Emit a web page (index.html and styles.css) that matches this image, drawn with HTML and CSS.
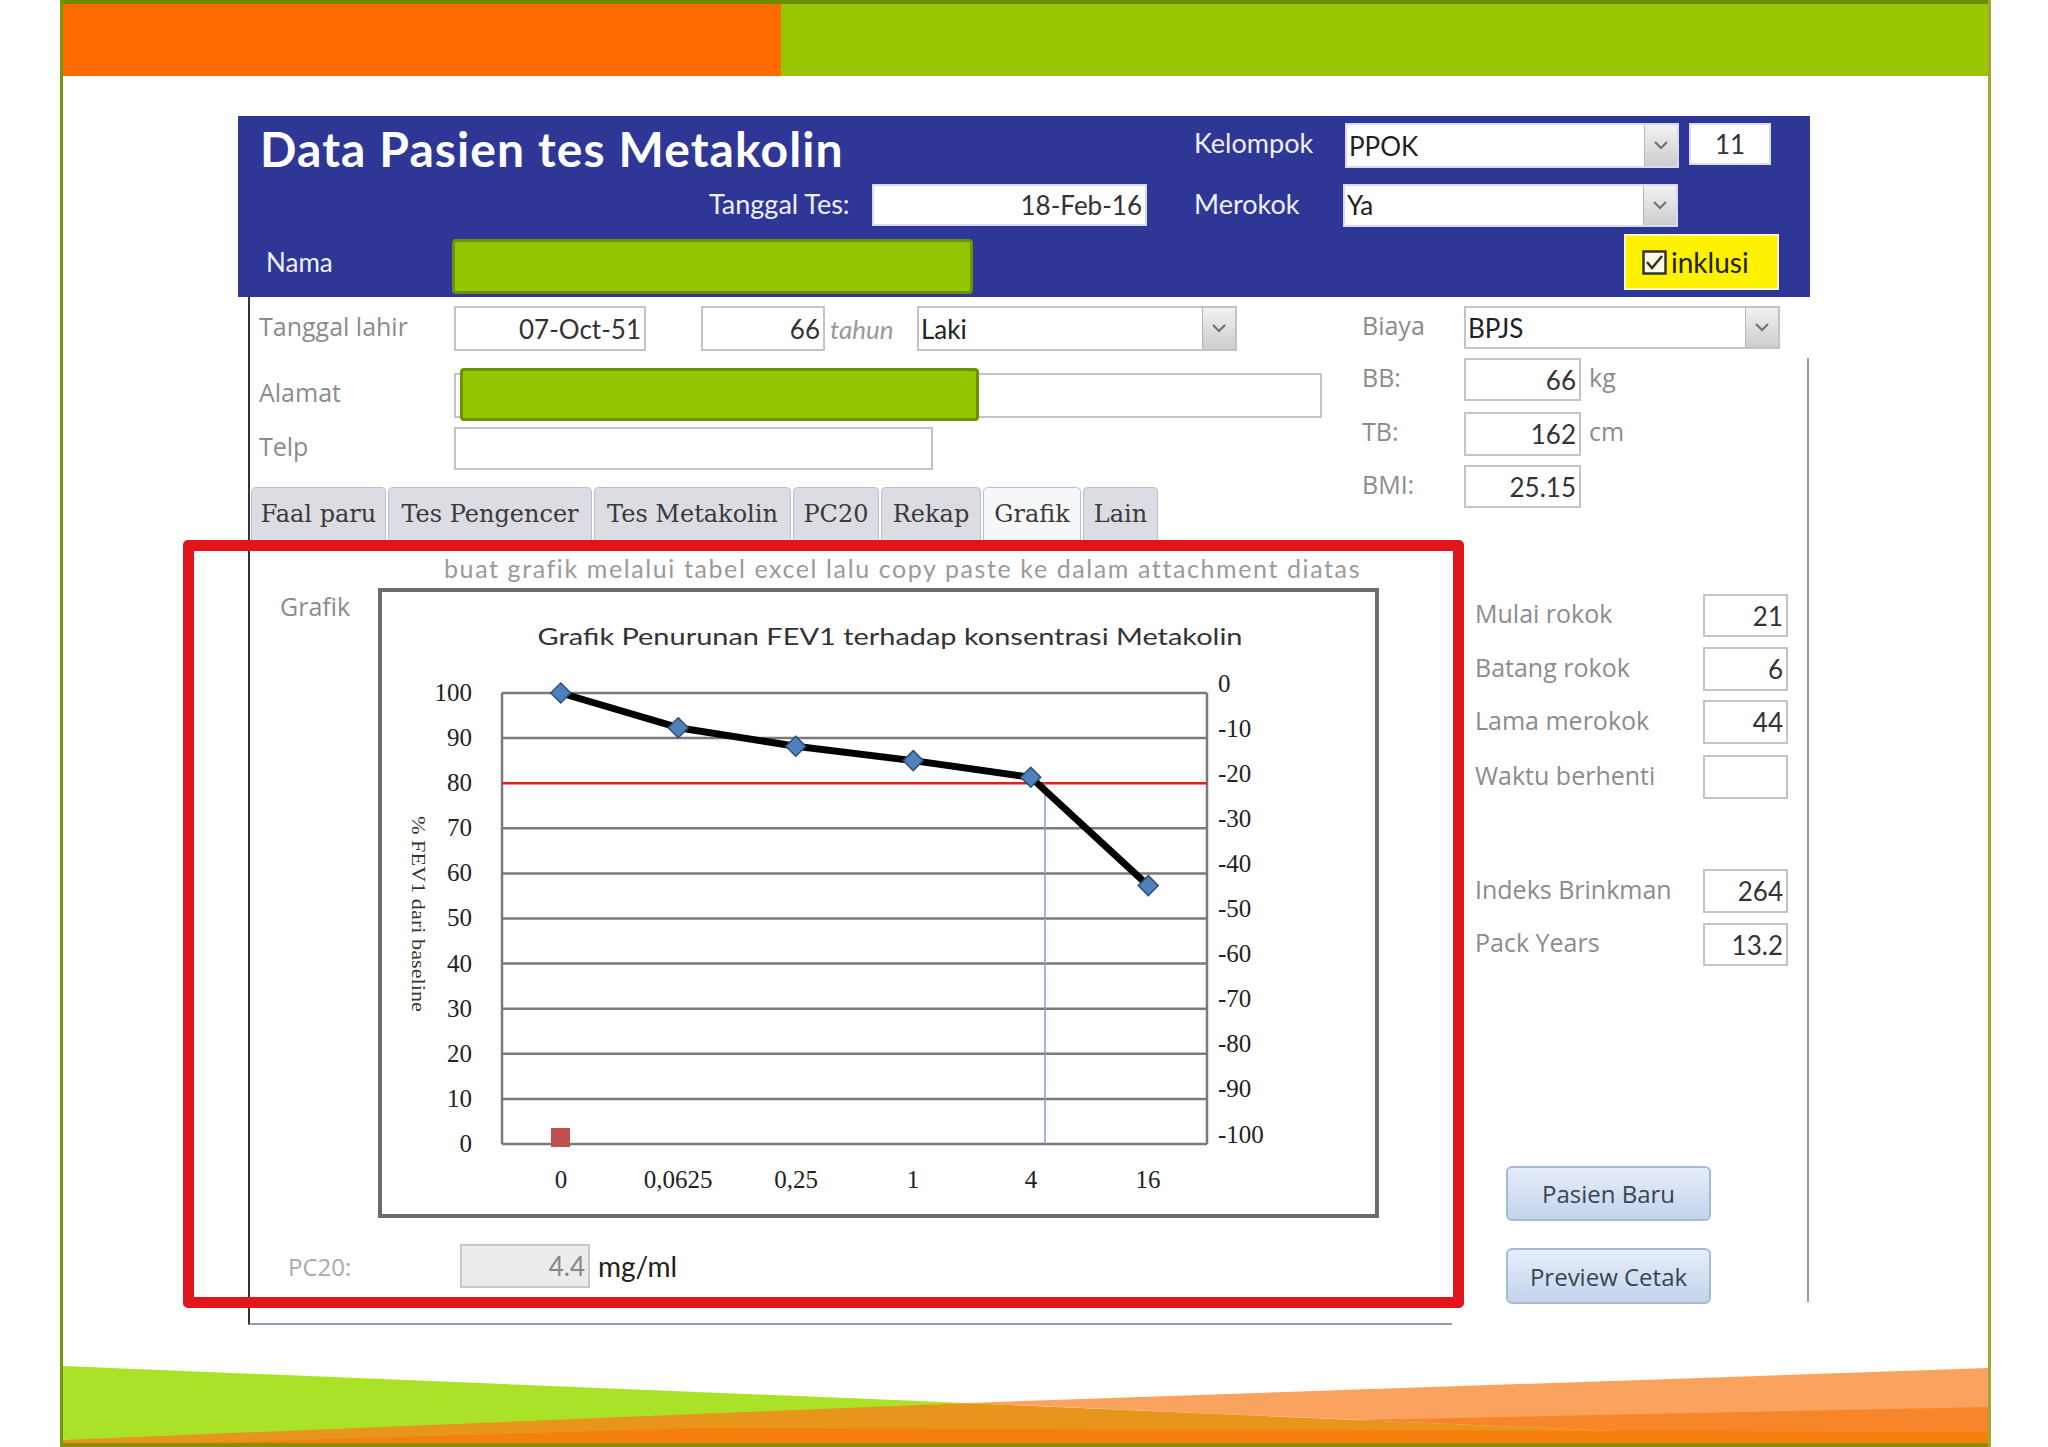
FILE: index.html
```html
<!DOCTYPE html>
<html>
<head>
<meta charset="utf-8">
<title>Data Pasien tes Metakolin</title>
<link rel="stylesheet" href="styles.css">
</head>
<body>
<div class="page">
  <div class="slide">
    <div class="topbar"><div class="bar-orange"></div><div class="bar-green"></div></div>

    <div class="form">
      <div class="header">
        <div class="hrow hrow1">
          <h1 class="title">Data Pasien tes Metakolin</h1>
          <span class="hlabel hl-kel">Kelompok</span>
          <div class="combo hcombo hc-kel"><span class="combo-text">PPOK</span><span class="combo-btn"><svg width="14" height="9" viewBox="0 0 14 9"><polyline points="1,1 7,7 13,1" fill="none" stroke="#707070" stroke-width="2"/></svg></span></div>
          <div class="hbox">11</div>
        </div>
        <div class="hrow hrow2">
          <span class="hlabel hl-tgl">Tanggal Tes:</span>
          <div class="hinput">18-Feb-16</div>
          <span class="hlabel hl-mer">Merokok</span>
          <div class="combo hcombo hc-mer"><span class="combo-text">Ya</span><span class="combo-btn"><svg width="14" height="9" viewBox="0 0 14 9"><polyline points="1,1 7,7 13,1" fill="none" stroke="#707070" stroke-width="2"/></svg></span></div>
        </div>
        <div class="hrow hrow3">
          <span class="hlabel hl-nama">Nama</span>
          <div class="redact redact-nama"></div>
          <div class="inklusi"><svg class="check" width="25" height="25" viewBox="0 0 25 25"><rect x="1.5" y="1.5" width="22" height="22" fill="#fffbe0" stroke="#333" stroke-width="2.5"/><polyline points="5,12 10,18 20,6" fill="none" stroke="#333" stroke-width="2.5"/></svg><span>inklusi</span></div>
        </div>
      </div>

      <div class="body">
        <div class="left-fields">
          <div class="frow fr-lahir">
            <span class="flabel">Tanggal lahir</span>
            <div class="field f-date">07-Oct-51</div>
            <div class="field f-age">66</div>
            <span class="tahun">tahun</span>
            <div class="combo c-laki"><span class="combo-text">Laki</span><span class="combo-btn"><svg width="14" height="9" viewBox="0 0 14 9"><polyline points="1,1 7,7 13,1" fill="none" stroke="#707070" stroke-width="2"/></svg></span></div>
          </div>
          <div class="frow fr-alamat">
            <span class="flabel">Alamat</span>
            <div class="alamat-wrap">
              <div class="field f-alamat"></div>
              <div class="redact redact-alamat"></div>
            </div>
          </div>
          <div class="frow fr-telp">
            <span class="flabel">Telp</span>
            <div class="field f-telp"></div>
          </div>
          <div class="tabs">
            <div class="tab">Faal paru</div>
            <div class="tab">Tes Pengencer</div>
            <div class="tab">Tes Metakolin</div>
            <div class="tab">PC20</div>
            <div class="tab">Rekap</div>
            <div class="tab active">Grafik</div>
            <div class="tab">Lain</div>
          </div>
        </div>

        <div class="right-fields">
          <div class="rrow rr-biaya">
            <span class="rlabel">Biaya</span>
            <div class="combo c-biaya"><span class="combo-text">BPJS</span><span class="combo-btn"><svg width="14" height="9" viewBox="0 0 14 9"><polyline points="1,1 7,7 13,1" fill="none" stroke="#707070" stroke-width="2"/></svg></span></div>
          </div>
          <div class="rrow rr-bb">
            <span class="rlabel">BB:</span>
            <div class="field f-small">66</div>
            <span class="unit">kg</span>
          </div>
          <div class="rrow rr-tb">
            <span class="rlabel">TB:</span>
            <div class="field f-small">162</div>
            <span class="unit">cm</span>
          </div>
          <div class="rrow rr-bmi">
            <span class="rlabel">BMI:</span>
            <div class="field f-small">25.15</div>
          </div>
        </div>

        <div class="vline"></div>

        <div class="tabpage">
          <div class="note">buat grafik melalui tabel excel lalu copy paste ke dalam attachment diatas</div>
          <div class="chart-row">
            <span class="grafik-label">Grafik</span>
            <div class="chart-box">
              <svg class="chart" width="993" height="622" viewBox="0 0 993 622">
                <text class="ch-title" x="508" y="53" text-anchor="middle" textLength="705" lengthAdjust="spacingAndGlyphs">Grafik Penurunan FEV1 terhadap konsentrasi Metakolin</text>
                <g class="grid">
                  <line x1="120" y1="101" x2="825" y2="101"/>
                  <line x1="120" y1="146.1" x2="825" y2="146.1"/>
                  <line x1="120" y1="236.3" x2="825" y2="236.3"/>
                  <line x1="120" y1="281.4" x2="825" y2="281.4"/>
                  <line x1="120" y1="326.5" x2="825" y2="326.5"/>
                  <line x1="120" y1="371.6" x2="825" y2="371.6"/>
                  <line x1="120" y1="416.7" x2="825" y2="416.7"/>
                  <line x1="120" y1="461.8" x2="825" y2="461.8"/>
                  <line x1="120" y1="506.9" x2="825" y2="506.9"/>
                  <line x1="120" y1="552" x2="825" y2="552"/>
                  <line x1="120" y1="101" x2="120" y2="552"/>
                  <line x1="825" y1="101" x2="825" y2="552"/>
                </g>
                <line class="redline" x1="120" y1="191.2" x2="825" y2="191.2"/>
                <line class="blueline" x1="663" y1="191.2" x2="663" y2="552"/>
                <g class="ylab-left">
                  <text x="90" y="109">100</text>
                  <text x="90" y="154">90</text>
                  <text x="90" y="199">80</text>
                  <text x="90" y="244">70</text>
                  <text x="90" y="289">60</text>
                  <text x="90" y="334">50</text>
                  <text x="90" y="380">40</text>
                  <text x="90" y="425">30</text>
                  <text x="90" y="470">20</text>
                  <text x="90" y="515">10</text>
                  <text x="90" y="560">0</text>
                </g>
                <g class="ylab-right">
                  <text x="836" y="100">0</text>
                  <text x="836" y="145">-10</text>
                  <text x="836" y="190">-20</text>
                  <text x="836" y="235">-30</text>
                  <text x="836" y="280">-40</text>
                  <text x="836" y="325">-50</text>
                  <text x="836" y="370">-60</text>
                  <text x="836" y="415">-70</text>
                  <text x="836" y="460">-80</text>
                  <text x="836" y="505">-90</text>
                  <text x="836" y="551">-100</text>
                </g>
                <g class="xlab">
                  <text x="179" y="596">0</text>
                  <text x="296" y="596">0,0625</text>
                  <text x="414" y="596">0,25</text>
                  <text x="531" y="596">1</text>
                  <text x="649" y="596">4</text>
                  <text x="766" y="596">16</text>
                </g>
                <text class="yaxis-title" transform="translate(30,322) rotate(90)" text-anchor="middle" textLength="196" lengthAdjust="spacingAndGlyphs">% FEV1 dari baseline</text>
                <polyline class="series" points="178.75,101 296.25,135.7 413.75,154.2 531.25,168.6 648.75,185.3 766.25,293.6"/>
                <g class="marks">
                  <polygon points="178.75,91 188.75,101 178.75,111 168.75,101"/>
                  <polygon points="296.25,125.7 306.25,135.7 296.25,145.7 286.25,135.7"/>
                  <polygon points="413.75,144.2 423.75,154.2 413.75,164.2 403.75,154.2"/>
                  <polygon points="531.25,158.6 541.25,168.6 531.25,178.6 521.25,168.6"/>
                  <polygon points="648.75,175.3 658.75,185.3 648.75,195.3 638.75,185.3"/>
                  <polygon points="766.25,283.6 776.25,293.6 766.25,303.6 756.25,293.6"/>
                </g>
                <rect class="redsq" x="169" y="536" width="19" height="19"/>
              </svg>
            </div>
          </div>
          <div class="pc-row">
            <span class="pc-label">PC20:</span>
            <div class="field f-pc">4.4</div>
            <span class="pc-unit">mg/ml</span>
          </div>
        </div>

        <div class="sidepanel">
          <div class="srow sr1"><span class="slabel">Mulai rokok</span><div class="field f-side">21</div></div>
          <div class="srow sr2"><span class="slabel">Batang rokok</span><div class="field f-side">6</div></div>
          <div class="srow sr3"><span class="slabel">Lama merokok</span><div class="field f-side">44</div></div>
          <div class="srow sr4"><span class="slabel">Waktu berhenti</span><div class="field f-side"></div></div>
          <div class="srow sr5"><span class="slabel">Indeks Brinkman</span><div class="field f-side">264</div></div>
          <div class="srow sr6"><span class="slabel">Pack Years</span><div class="field f-side">13.2</div></div>
          <div class="btn btn-baru">Pasien Baru</div>
          <div class="btn btn-cetak">Preview Cetak</div>
        </div>
      </div>
    </div>

    <svg class="bottom-deco" width="1925" height="87" viewBox="63 1360 1925 87" preserveAspectRatio="none">
      <polygon class="d-lime" points="63,1366 967,1403 63,1447"/>
      <polygon class="d-light" points="1988,1368 967,1403 1988,1447"/>
      <polygon class="d-amber" points="63,1440 967,1403 1358,1420 1988,1447 63,1447"/>
      <polygon class="d-orange" points="1988,1407 1358,1420 1988,1447"/>
      <polygon class="d-bright" points="63,1447 700,1428 1988,1432 1988,1447"/>
      <rect class="d-line" x="63" y="1443" width="1925" height="4"/>
    </svg>
  </div>
  <div class="highlight"></div>
</div>
</body>
</html>
```

FILE: styles.css
```css
* { box-sizing: border-box; }
html, body { margin: 0; padding: 0; }
body {
  width: 2048px;
  height: 1447px;
  overflow: hidden;
  background: #ffffff;
  font-family: Lato, "Open Sans", sans-serif;
  color: #333;
}
.page { position: relative; width: 2048px; height: 1447px; }

.slide {
  margin-left: 60px;
  width: 1931px;
  height: 1447px;
  border-left: 3px solid #6f9a0a;
  border-right: 3px solid #a0a834;
  display: flex;
  flex-direction: column;
}
.topbar { display: flex; height: 76px; border-top: 4px solid #6b8c00; flex: none; }
.bar-orange { width: 718px; background: #ff6b00; }
.bar-green { flex: 1; background: #99c600; }

.form { margin-left: 175px; margin-top: 40px; width: 1572px; flex: none; }

/* header */
.header { height: 181px; background: #2e3796; padding-top: 7px; }
.hrow { display: flex; align-items: center; }
.hrow1 { height: 45px; }
.hrow2 { height: 42px; margin-top: 16px; }
.hrow3 { height: 60px; margin-top: 8px; align-items: flex-start; }
.title {
  margin: 0 0 0 22px;
  width: 934px;
  height: 45px;
  align-self: flex-start;
  font: 700 48px/51px Lato, sans-serif;
  letter-spacing: 1.1px;
  color: #ffffff;
  white-space: nowrap;
}
.hlabel { color: #eef0ff; font-size: 27px; white-space: nowrap; }
.hl-kel { width: 151px; padding-bottom: 6px; }
.hl-tgl { margin-left: 471px; width: 163px; padding-bottom: 4px; }
.hl-mer { margin-left: 47px; width: 149px; padding-bottom: 4px; }
.hl-nama { margin-left: 28px; width: 186px; line-height: 56px; font-size: 26px; }

.combo {
  display: flex;
  background: #ffffff;
  border: 2px solid #c4c4c4;
  font-size: 26px;
  color: #222;
}
.combo-text { flex: 1; padding-left: 2px; display: flex; align-items: center; white-space: nowrap; }
.combo-btn {
  width: 33px;
  display: flex;
  align-items: center;
  justify-content: center;
  background: linear-gradient(#f2f2f2, #cdcdcd);
  border-left: 1px solid #b8b8b8;
}
.hcombo { border-color: #d6dbef; }
.hc-kel { width: 334px; height: 45px; }
.hc-mer { width: 335px; height: 43px; }
.hbox {
  margin-left: 10px;
  width: 82px;
  height: 42px;
  align-self: flex-start;
  background: #fff;
  border: 2px solid #d6dbef;
  font-size: 26px;
  color: #333;
  display: flex;
  align-items: center;
  justify-content: center;
}
.hinput {
  width: 275px;
  height: 42px;
  background: #fff;
  border: 2px solid #d6dbef;
  font-size: 26px;
  color: #333;
  display: flex;
  align-items: center;
  justify-content: flex-end;
  padding-right: 3px;
}
.redact {
  background: #94c500;
  border: 3px solid #6c9400;
  border-radius: 4px;
}
.redact-nama { width: 521px; height: 55px; margin-top: 5px; }
.inklusi {
  margin-left: 651px;
  width: 155px;
  height: 56px;
  background: #fff200;
  border: 2px solid #f5f3c8;
  display: flex;
  align-items: center;
  padding-left: 16px;
  gap: 4px;
  font-size: 28px;
  color: #222;
}
.check { flex: none; }

/* body */
.body {
  margin-left: 10px;
  width: 1562px;
  display: grid;
  grid-template-columns: 1114px 90px 355px 3px;
  grid-template-rows: auto auto;
}
.left-fields {
  grid-column: 1;
  grid-row: 1;
  border-left: 2px solid #333;
  padding-top: 9px;
}
.frow { display: flex; align-items: center; }
.flabel { width: 204px; padding-left: 9px; padding-bottom: 6px; font-family: "Open Sans", sans-serif; font-size: 25px; color: #8c8c8c; white-space: nowrap; }
.fr-lahir { height: 45px; }
.fr-alamat { height: 53px; margin-top: 17px; }
.fr-telp { height: 43px; margin-top: 6px; }

.field {
  background: #fff;
  border: 2px solid #c4c4c4;
  font-size: 26px;
  color: #333;
  display: flex;
  align-items: center;
  justify-content: flex-end;
  padding-right: 3px;
  white-space: nowrap;
}
.f-date { width: 192px; height: 45px; }
.f-age { width: 124px; height: 45px; margin-left: 55px; }
.tahun { margin-left: 5px; width: 87px; font-style: italic; font-size: 26px; color: #9a9a9a; }
.c-laki { width: 320px; height: 45px; }
.alamat-wrap { position: relative; width: 868px; height: 53px; }
.f-alamat { width: 868px; height: 45px; margin-top: 5px; }
.redact-alamat { position: absolute; left: 6px; top: 0; width: 519px; height: 53px; }
.f-telp { width: 479px; height: 43px; }

.tabs {
  margin-top: 17px;
  margin-left: 1px;
  height: 53px;
  display: grid;
  grid-template-columns: 135px 204px 197px 86px 100px 98px 75px;
  column-gap: 2px;
}
.tab {
  background: #dcdde2;
  border: 1px solid #b6c0d6;
  border-bottom: none;
  border-radius: 5px 5px 0 0;
  font-family: "DejaVu Serif", "Liberation Serif", serif;
  font-size: 24px;
  color: #3a3a3a;
  display: flex;
  align-items: center;
  justify-content: center;
  white-space: nowrap;
}
.tab.active { background: #f7f8fa; }

.right-fields {
  grid-column: 2 / 4;
  grid-row: 1;
  padding-top: 9px;
  align-self: start;
}
.rrow { display: flex; align-items: center; }
.rlabel { width: 102px; padding-bottom: 6px; font-family: "Open Sans", sans-serif; font-size: 25px; color: #8c8c8c; }
.rr-biaya { height: 43px; }
.rr-bb { height: 43px; margin-top: 9px; }
.rr-tb { height: 44px; margin-top: 11px; }
.rr-bmi { height: 43px; margin-top: 9px; }
.c-biaya { width: 316px; height: 43px; }
.f-small { width: 117px; height: 100%; }
.unit { margin-left: 8px; padding-bottom: 6px; font-family: "Open Sans", sans-serif; font-size: 25px; color: #8c8c8c; }

.vline {
  grid-column: 4;
  grid-row: 1 / 3;
  width: 2px;
  background: #9a9a9a;
  margin-top: 61px;
  margin-bottom: 23px;
}

.tabpage {
  grid-column: 1 / 3;
  grid-row: 2;
  border-left: 2px solid #333;
  border-bottom: 2px solid #8d9db2;
  padding-bottom: 35px;
}
.note {
  height: 48px;
  padding-top: 8px;
  padding-left: 194px;
  line-height: 40px;
  font-size: 25px;
  letter-spacing: 1.6px;
  color: #9a9a9a;
  white-space: nowrap;
}
.chart-row { display: flex; }
.grafik-label {
  width: 128px;
  padding-left: 30px;
  margin-top: 4px;
  line-height: 28px;
  font-family: "Open Sans", sans-serif;
  font-size: 25px;
  color: #8c8c8c;
}
.chart-box {
  width: 1001px;
  height: 630px;
  border: 4px solid #6c6c6c;
  background: #fff;
}
.chart { display: block; }
.ch-title { font-family: Lato, sans-serif; font-size: 24px; fill: #333; }
.grid line { stroke: #7a7a7a; stroke-width: 2.5; }
.redline { stroke: #e0201c; stroke-width: 2.5; }
.blueline { stroke: #7f9fd2; stroke-width: 1.5; }
.ylab-left text { font-family: "Liberation Serif", serif; font-size: 25px; fill: #222; text-anchor: end; }
.ylab-right text { font-family: "Liberation Serif", serif; font-size: 25px; fill: #222; }
.xlab text { font-family: "Liberation Serif", serif; font-size: 25px; fill: #222; text-anchor: middle; }
.yaxis-title { font-family: "Liberation Serif", serif; font-size: 19px; fill: #333; }
.series { fill: none; stroke: #000; stroke-width: 7; stroke-linejoin: round; }
.marks polygon { fill: #4f81bd; stroke: #2c4f7c; stroke-width: 1.5; }
.redsq { fill: #c0504d; }

.pc-row { display: flex; align-items: center; height: 44px; margin-top: 26px; }
.pc-label { width: 210px; padding-left: 38px; font-family: "Open Sans", sans-serif; font-size: 24px; color: #aaaaaa; }
.f-pc { width: 130px; height: 44px; background: #ececec; border-color: #c8c8c8; color: #888; }
.pc-unit { margin-left: 8px; font-size: 28px; color: #222; }

.sidepanel {
  grid-column: 3;
  grid-row: 2;
  padding-top: 54px;
  padding-left: 23px;
  display: flex;
  flex-direction: column;
}
.srow { display: flex; align-items: center; }
.slabel { width: 228px; padding-bottom: 5px; font-family: "Open Sans", sans-serif; font-size: 25px; color: #8c8c8c; white-space: nowrap; }
.f-side { width: 85px; height: 100%; }
.sr1 { height: 43px; }
.sr2 { height: 44px; margin-top: 10px; }
.sr3 { height: 44px; margin-top: 9px; }
.sr4 { height: 44px; margin-top: 11px; }
.sr5 { height: 44px; margin-top: 70px; }
.sr6 { height: 43px; margin-top: 10px; }
.btn {
  margin-left: 31px;
  width: 205px;
  background: linear-gradient(#e6eefa, #c3d3ec);
  border: 2px solid #a9bad4;
  border-radius: 6px;
  font-family: "Open Sans", sans-serif;
  font-size: 24px;
  color: #3a4552;
  display: flex;
  align-items: center;
  justify-content: center;
  white-space: nowrap;
}
.btn-baru { height: 55px; margin-top: 200px; }
.btn-cetak { height: 56px; margin-top: 27px; }

/* bottom decoration */
.bottom-deco { display: block; margin-top: auto; flex: none; }
.d-lime { fill: #a9e227; }
.d-light { fill: #f9a35f; }
.d-amber { fill: #e8951b; }
.d-orange { fill: #f7862a; }
.d-bright { fill: #f77f0c; }
.d-line { fill: #8a8c10; }

/* red annotation frame over the tab page */
.highlight {
  position: absolute;
  left: 183px;
  top: 540px;
  width: 1281px;
  height: 768px;
  border: 11px solid #e1151b;
  border-radius: 5px;
  pointer-events: none;
}
```
